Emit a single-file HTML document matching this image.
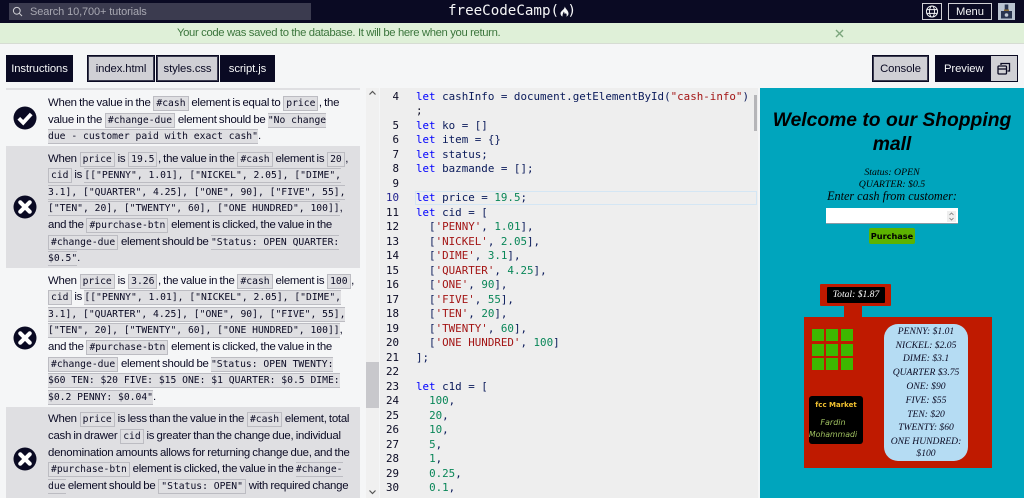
<!DOCTYPE html>
<html><head><meta charset="utf-8"><style>
html,body{margin:0;padding:0;width:1024px;height:498px;overflow:hidden;background:#f5f6f7;font-family:"Liberation Sans",sans-serif}
.a{position:absolute}
.t{position:absolute;left:48px;margin-top:1px;white-space:nowrap;font-size:11.4px;line-height:16px;color:#0a0a23;letter-spacing:-.25px;word-spacing:-.6px}
.t code{font-family:"DejaVu Sans Mono",monospace;font-size:9.7px;background:#dfdfe2;border:1px solid #bcbcc2;padding:1px 2px;letter-spacing:0;word-spacing:0;margin:0 .5px;color:#0a0a23}
.t code.w{margin:0;border-left:0;border-right:0;padding:1px 0}
.c{position:absolute;left:416px;margin-top:1px;white-space:pre;font-family:"DejaVu Sans Mono",monospace;font-size:10.85px;line-height:14px;color:#0a1a5a}
.n{position:absolute;left:381px;margin-top:1px;width:18px;text-align:right;font-family:"DejaVu Sans Mono",monospace;font-size:10.85px;line-height:14px;color:#0a0a23}
.k{color:#0000ff}.s{color:#a31515}.d{color:#098658}
.b{position:absolute;top:55px;height:27px;box-sizing:border-box;border:1px solid #0a0a23;font-size:11.3px;line-height:26px;text-align:center;background:#d0d0d5;color:#0a0a23;outline:1px solid #3b3b4f;outline-offset:-2px;letter-spacing:-.1px}
.b.o{background:#0a0a23;color:#f5f6f7;outline:0}
.pr{position:absolute;left:884px;width:84px;text-align:center;font:italic 9.6px "Liberation Serif",serif;color:#0a0a23;line-height:14px;white-space:nowrap}
.key{position:absolute;width:12px;height:12px;background:#3db800}
</style></head><body>
<div class="a" style="left:0;top:0;width:1024px;height:23px;background:#0a0a23"></div>
<div class="a" style="left:9px;top:3px;width:302px;height:17px;background:#3b3b4f"></div>
<svg class="a" style="left:12px;top:6px" width="11" height="11" viewBox="0 0 11 11" fill="none" stroke="#d0d0d5" stroke-width="1"><circle cx="4.8" cy="4.8" r="3.4"/><path d="M7.3 7.3L10 10"/></svg>
<div class="a" style="left:30px;top:4px;font-size:11px;letter-spacing:-.12px;line-height:17px;color:#a8a8b2;white-space:nowrap">Search 10,700+ tutorials</div>
<div class="a" style="left:448px;top:2px;font-family:'DejaVu Sans Mono',monospace;font-size:14.2px;line-height:18px;color:#f5f6f7;white-space:nowrap">freeCodeCamp(<span style="display:inline-block;width:8.5px"></span>)</div>
<svg class="a" style="left:560px;top:6px" width="9" height="11" viewBox="0 0 9 11"><path d="M4.8 0.5C5.5 3 8.5 4.5 8.5 7.5C8.5 9.3 7.2 10.5 6.3 10.5C7 9.5 6.8 8 5.8 7C5.5 7.8 5 8 4.5 7.8C4.7 6.8 4.2 6 3.6 5.6C3.6 7 2.2 8 2.6 10.5C1.4 10.2 .5 9 .5 7.5C.5 4.8 4.8 3.5 4.8 .5Z" fill="#f5f6f7"/></svg>
<div class="a" style="left:922px;top:3px;width:20px;height:17px;box-sizing:border-box;border:1px solid #d0d0d5"></div>
<svg class="a" style="left:925px;top:5px" width="14" height="13" viewBox="0 0 14 14" fill="none" stroke="#f5f6f7" stroke-width="1"><circle cx="7" cy="7" r="6"/><ellipse cx="7" cy="7" rx="2.7" ry="6"/><path d="M1 5H13M1 9H13"/></svg>
<div class="a" style="left:948px;top:3px;width:44px;height:17px;box-sizing:border-box;border:1px solid #d0d0d5;color:#f5f6f7;font-size:11.2px;line-height:16px;text-align:center">Menu</div>
<div class="a" style="left:998px;top:3px;width:17px;height:17px;background:#b9c3d0"></div>
<svg class="a" style="left:998px;top:3px" width="17" height="17" viewBox="0 0 17 17"><rect x="6.7" y="1.5" width="3.6" height="5" fill="#2a3550"/><rect x="3" y="8" width="11" height="7.5" fill="#2a3550"/><rect x="6" y="6.5" width="5" height="1.5" fill="#8a6a30"/><circle cx="8.5" cy="12" r="1.8" fill="#c0c8d4"/></svg>

<div class="a" style="left:0;top:23px;width:1024px;height:20px;background:#dff0d8;border-bottom:1px solid #d6dcd3"></div>
<div class="a" style="left:177px;top:25px;font-size:11.3px;letter-spacing:-.36px;line-height:17px;color:#3c763d;white-space:nowrap">Your code was saved to the database. It will be here when you return.</div>
<svg class="a" style="left:835px;top:29px" width="9" height="9" viewBox="0 0 9 9" stroke="#7ba67c" stroke-width="1.4"><path d="M1 1L8 8M8 1L1 8"/></svg>

<div class="b o" style="left:6px;width:67px">Instructions</div>
<div class="b" style="left:87px;width:68px">index.html</div>
<div class="b" style="left:156px;width:63px">styles.css</div>
<div class="b o" style="left:220px;width:55px">script.js</div>
<div class="b" style="left:872px;width:57px">Console</div>
<div class="b o" style="left:935px;width:83px;text-align:left;padding-left:8px">Preview</div>
<div class="a" style="left:991px;top:56px;width:26px;height:25px;background:#d0d0d5"></div>
<svg class="a" style="left:997px;top:62px" width="14" height="13" viewBox="0 0 14 13" fill="none" stroke="#0a0a23" stroke-width="1.3"><rect x="1" y="4" width="8.5" height="8" rx="1"/><path d="M1 7H9.5" /><path d="M4 3V1.5H12.5V9H10.5"/></svg>

<div class="a" style="left:0;top:88px;width:381px;height:410px;background:#f5f6f7"></div>
<div class="a" style="left:6px;top:88px;width:354px;height:2px;background:#dfdfe2"></div>
<div class="a" style="left:6px;top:146px;width:354px;height:122px;background:#dfdfe2"></div>
<div class="a" style="left:6px;top:407px;width:354px;height:91px;background:#dfdfe2"></div>
<div class="a" style="left:366px;top:88px;width:13px;height:410px;background:#f0f0f0"></div>
<div class="a" style="left:366px;top:362px;width:13px;height:46px;background:#c8c8cc"></div>
<svg class="a" style="left:368px;top:90px" width="9" height="6" viewBox="0 0 9 6" fill="none" stroke="#555" stroke-width="1.2"><path d="M1.5 4.5L4.5 1.5L7.5 4.5"/></svg>
<svg class="a" style="left:368px;top:489px" width="9" height="6" viewBox="0 0 9 6" fill="none" stroke="#555" stroke-width="1.2"><path d="M1.5 1.5L4.5 4.5L7.5 1.5"/></svg>

<svg class="a" style="left:13px;top:106px" width="24" height="24" viewBox="0 0 24 24"><circle cx="12" cy="12" r="11.5" fill="#0a0a23"/><path d="M5.8 12.3L10.2 16.7L18.2 8" fill="none" stroke="#fff" stroke-width="3.8"/></svg>
<svg class="a" style="left:13px;top:195px" width="24" height="24" viewBox="0 0 24 24"><circle cx="12" cy="12" r="11.5" fill="#0a0a23"/><path d="M7.3 7.3L16.7 16.7M16.7 7.3L7.3 16.7" fill="none" stroke="#fff" stroke-width="4.2" stroke-linecap="round"/></svg>
<svg class="a" style="left:13px;top:326px" width="24" height="24" viewBox="0 0 24 24"><circle cx="12" cy="12" r="11.5" fill="#0a0a23"/><path d="M7.3 7.3L16.7 16.7M16.7 7.3L7.3 16.7" fill="none" stroke="#fff" stroke-width="4.2" stroke-linecap="round"/></svg>
<svg class="a" style="left:13px;top:447px" width="24" height="24" viewBox="0 0 24 24"><circle cx="12" cy="12" r="11.5" fill="#0a0a23"/><path d="M7.3 7.3L16.7 16.7M16.7 7.3L7.3 16.7" fill="none" stroke="#fff" stroke-width="4.2" stroke-linecap="round"/></svg>

<div class="t" style="top:94px">When the value in the <code>#cash</code> element is equal to <code>price</code>, the</div>
<div class="t" style="top:111px">value in the <code>#change-due</code> element should be <code class="w">"No change </code></div>
<div class="t" style="top:127px"><code class="w">due - customer paid with exact cash"</code>.</div>

<div class="t" style="top:150px">When <code>price</code> is <code>19.5</code>, the value in the <code>#cash</code> element is <code>20</code>,</div>
<div class="t" style="top:166px;left:47.5px"><code>cid</code> is <code class="w">[["PENNY", 1.01], ["NICKEL", 2.05], ["DIME",</code></div>
<div class="t" style="top:183px"><code class="w">3.1], ["QUARTER", 4.25], ["ONE", 90], ["FIVE", 55],</code></div>
<div class="t" style="top:199px"><code class="w">["TEN", 20], ["TWENTY", 60], ["ONE HUNDRED", 100]]</code>,</div>
<div class="t" style="top:216px">and the <code>#purchase-btn</code> element is clicked, the value in the</div>
<div class="t" style="top:233px;left:47.5px"><code>#change-due</code> element should be <code class="w">"Status: OPEN QUARTER:</code></div>
<div class="t" style="top:249px"><code class="w">$0.5"</code>.</div>

<div class="t" style="top:272px">When <code>price</code> is <code>3.26</code>, the value in the <code>#cash</code> element is <code>100</code>,</div>
<div class="t" style="top:288px;left:47.5px"><code>cid</code> is <code class="w">[["PENNY", 1.01], ["NICKEL", 2.05], ["DIME",</code></div>
<div class="t" style="top:305px"><code class="w">3.1], ["QUARTER", 4.25], ["ONE", 90], ["FIVE", 55],</code></div>
<div class="t" style="top:321px"><code class="w">["TEN", 20], ["TWENTY", 60], ["ONE HUNDRED", 100]]</code>,</div>
<div class="t" style="top:338px">and the <code>#purchase-btn</code> element is clicked, the value in the</div>
<div class="t" style="top:355px;left:47.5px"><code>#change-due</code> element should be <code class="w">"Status: OPEN TWENTY:</code></div>
<div class="t" style="top:371px"><code class="w">$60 TEN: $20 FIVE: $15 ONE: $1 QUARTER: $0.5 DIME:</code></div>
<div class="t" style="top:388px"><code class="w">$0.2 PENNY: $0.04"</code>.</div>

<div class="t" style="top:410px">When <code>price</code> is less than the value in the <code>#cash</code> element, total</div>
<div class="t" style="top:427px">cash in drawer <code>cid</code> is greater than the change due, individual</div>
<div class="t" style="top:444px">denomination amounts allows for returning change due, and the</div>
<div class="t" style="top:460px;left:47.5px"><code>#purchase-btn</code> element is clicked, the value in the <code class="w">#change-</code></div>
<div class="t" style="top:477px"><code class="w">due</code> element should be <code>"Status: OPEN"</code> with required change</div>

<div class="a" style="left:380px;top:88px;width:378px;height:410px;background:#eeeeee;overflow:hidden"></div>
<div class="a" style="left:415px;top:191px;width:340px;height:12px;border:1px solid #d4e6f4"></div>
<div class="a" style="left:754px;top:95px;width:3px;height:36px;background:#b5b5b8"></div>

<div class="n" style="top:89px">4</div><div class="c" style="top:89px"><span class="k">let</span> cashInfo = document.getElementById(<span class="s">"cash-info"</span>)</div>
<div class="c" style="top:103px;color:#0a0a23">;</div>
<div class="n" style="top:118px">5</div><div class="c" style="top:118px"><span class="k">let</span> ko = []</div>
<div class="n" style="top:132px">6</div><div class="c" style="top:132px"><span class="k">let</span> item = {}</div>
<div class="n" style="top:147px">7</div><div class="c" style="top:147px"><span class="k">let</span> status;</div>
<div class="n" style="top:161px">8</div><div class="c" style="top:161px"><span class="k">let</span> bazmande = [];</div>
<div class="n" style="top:176px">9</div>
<div class="n" style="top:190px;color:#1f1f8f">10</div><div class="c" style="top:190px"><span class="k">let</span> price = <span class="d">19.5</span>;</div>
<div class="n" style="top:205px">11</div><div class="c" style="top:205px"><span class="k">let</span> cid = [</div>
<div class="n" style="top:219px">12</div><div class="c" style="top:219px">  [<span class="s">'PENNY'</span>, <span class="d">1.01</span>],</div>
<div class="n" style="top:234px">13</div><div class="c" style="top:234px">  [<span class="s">'NICKEL'</span>, <span class="d">2.05</span>],</div>
<div class="n" style="top:248px">14</div><div class="c" style="top:248px">  [<span class="s">'DIME'</span>, <span class="d">3.1</span>],</div>
<div class="n" style="top:263px">15</div><div class="c" style="top:263px">  [<span class="s">'QUARTER'</span>, <span class="d">4.25</span>],</div>
<div class="n" style="top:277px">16</div><div class="c" style="top:277px">  [<span class="s">'ONE'</span>, <span class="d">90</span>],</div>
<div class="n" style="top:292px">17</div><div class="c" style="top:292px">  [<span class="s">'FIVE'</span>, <span class="d">55</span>],</div>
<div class="n" style="top:306px">18</div><div class="c" style="top:306px">  [<span class="s">'TEN'</span>, <span class="d">20</span>],</div>
<div class="n" style="top:321px">19</div><div class="c" style="top:321px">  [<span class="s">'TWENTY'</span>, <span class="d">60</span>],</div>
<div class="n" style="top:335px">20</div><div class="c" style="top:335px">  [<span class="s">'ONE HUNDRED'</span>, <span class="d">100</span>]</div>
<div class="n" style="top:350px">21</div><div class="c" style="top:350px">];</div>
<div class="n" style="top:364px">22</div>
<div class="n" style="top:379px">23</div><div class="c" style="top:379px"><span class="k">let</span> c1d = [</div>
<div class="n" style="top:393px">24</div><div class="c" style="top:393px">  <span class="d">100</span>,</div>
<div class="n" style="top:408px">25</div><div class="c" style="top:408px">  <span class="d">20</span>,</div>
<div class="n" style="top:422px">26</div><div class="c" style="top:422px">  <span class="d">10</span>,</div>
<div class="n" style="top:437px">27</div><div class="c" style="top:437px">  <span class="d">5</span>,</div>
<div class="n" style="top:451px">28</div><div class="c" style="top:451px">  <span class="d">1</span>,</div>
<div class="n" style="top:466px">29</div><div class="c" style="top:466px">  <span class="d">0.25</span>,</div>
<div class="n" style="top:480px">30</div><div class="c" style="top:480px">  <span class="d">0.1</span>,</div>

<div class="a" style="left:758px;top:88px;width:2px;height:410px;background:#f5f6f7"></div>
<div class="a" style="left:760px;top:88px;width:264px;height:410px;background:#00a5bd"></div>

<div class="a" style="left:760px;top:109px;width:264px;text-align:center;font:italic bold 19.3px/23.5px 'Liberation Sans',sans-serif;color:#000;white-space:nowrap">Welcome to our Shopping<br>mall</div>
<div class="a" style="left:760px;top:167px;width:264px;text-align:center;font:italic 9.8px/11.5px 'Liberation Serif',serif;color:#000">Status: OPEN<br>QUARTER: $0.5</div>
<div class="a" style="left:760px;top:188px;width:264px;text-align:center;font:italic 12.2px/16px 'Liberation Serif',serif;color:#000">Enter cash from customer:</div>
<div class="a" style="left:826px;top:208px;width:132px;height:15px;background:#fff;border-bottom:1px solid #8a9aa5;box-sizing:content-box"></div>
<div class="a" style="left:947px;top:211px;width:9px;height:11px;background:#eee"></div>
<svg class="a" style="left:948px;top:212px" width="7" height="9" viewBox="0 0 7 9" fill="none" stroke="#777" stroke-width=".8"><path d="M1.5 3L3.5 1L5.5 3M1.5 6L3.5 8L5.5 6"/></svg>
<div class="a" style="left:869px;top:228px;width:46px;height:16px;background:#5cb300;border-radius:2px;text-align:center;font:bold 8.2px/17px 'DejaVu Sans',sans-serif;color:#000">Purchase</div>

<div class="a" style="left:820px;top:284px;width:71px;height:22px;background:#bf1a00;border-radius:1px"></div>
<div class="a" style="left:827px;top:287px;width:58px;height:16px;background:#000;border-radius:1px;text-align:center;font:italic 9.6px/16px 'Liberation Serif',serif;color:#fff">Total: $1.87</div>
<div class="a" style="left:844px;top:306px;width:18px;height:12px;background:#bf1a00"></div>
<div class="a" style="left:804px;top:317px;width:188px;height:151px;background:#bf1a00"></div>
<div class="key" style="left:812px;top:329px"></div><div class="key" style="left:826px;top:329px"></div><div class="key" style="left:841px;top:329px"></div>
<div class="key" style="left:812px;top:344px"></div><div class="key" style="left:826px;top:344px"></div><div class="key" style="left:841px;top:344px"></div>
<div class="key" style="left:812px;top:358px"></div><div class="key" style="left:826px;top:358px"></div><div class="key" style="left:841px;top:358px"></div>
<div class="a" style="left:809px;top:396px;width:54px;height:48px;background:#000;border-radius:3px"></div>
<div class="a" style="left:809px;top:398px;width:54px;text-align:center;font:bold 7px/14px 'DejaVu Sans',sans-serif;color:#f0c030;white-space:nowrap">fcc Market</div>
<div class="a" style="left:809px;top:416px;width:48px;text-align:center;font:italic 8px/14px 'DejaVu Sans',sans-serif;color:#9fc060;white-space:nowrap">Fardin</div>
<div class="a" style="left:806px;top:428px;width:54px;text-align:center;font:italic 7.8px/14px 'DejaVu Sans',sans-serif;color:#9fc060;white-space:nowrap">Mohammadi</div>
<div class="a" style="left:884px;top:324px;width:84px;height:137px;background:#b5dcf3;border-radius:14px"></div>
<div class="pr" style="top:325px">PENNY: $1.01</div>
<div class="pr" style="top:339px">NICKEL: $2.05</div>
<div class="pr" style="top:352px">DIME: $3.1</div>
<div class="pr" style="top:366px">QUARTER $3.75</div>
<div class="pr" style="top:380px">ONE: $90</div>
<div class="pr" style="top:394px">FIVE: $55</div>
<div class="pr" style="top:408px">TEN: $20</div>
<div class="pr" style="top:421px">TWENTY: $60</div>
<div class="pr" style="top:435px">ONE HUNDRED:</div>
<div class="pr" style="top:447px">$100</div>
</body></html>
